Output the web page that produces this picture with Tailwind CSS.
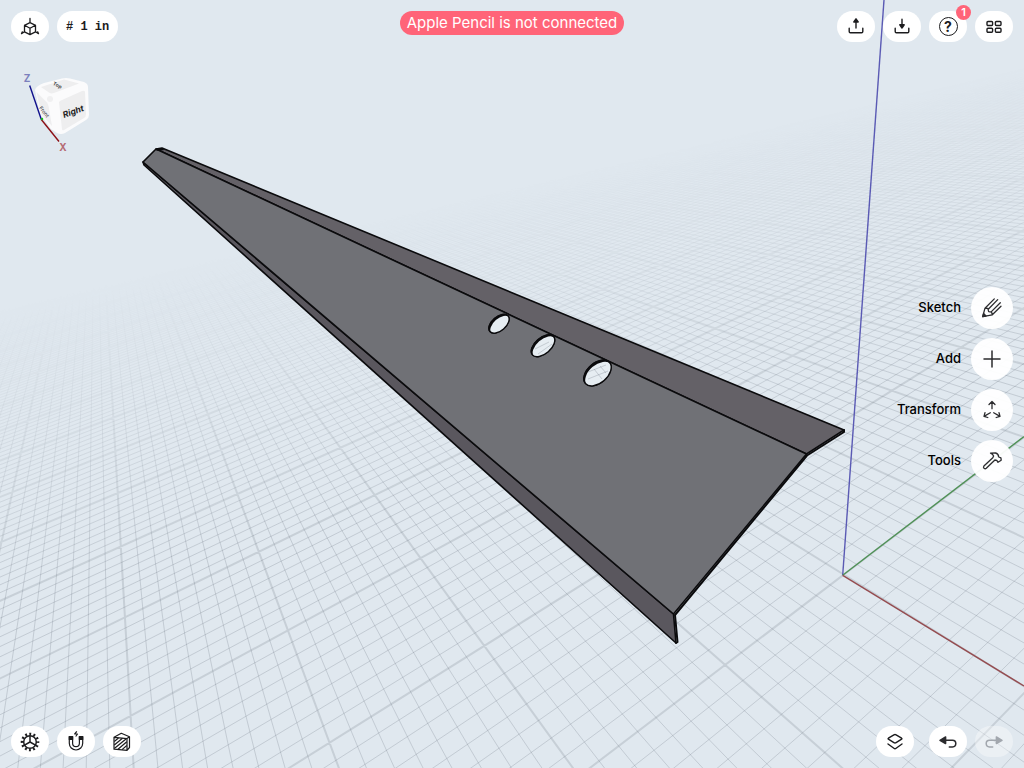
<!DOCTYPE html>
<html lang="en">
<head>
<meta charset="utf-8">
<meta name="viewport" content="width=device-width, initial-scale=1">
<title>3D modeling workspace</title>
<script src="https://cdn.jsdelivr.net/npm/@tailwindcss/browser@4"></script>
</head>
<body class="bg-[#e0e8ef] font-[Inter,'Liberation_Sans',sans-serif] text-[#1c1c1e]">
<div class="relative flex h-screen flex-col overflow-hidden">

  <!-- 3D viewport -->
  <svg class="absolute inset-0 h-full w-full" viewBox="0 0 1024 768" preserveAspectRatio="xMidYMid slice" aria-label="3D model" role="img">
    <defs>
      <linearGradient id="fade" gradientUnits="userSpaceOnUse" x1="500" y1="190" x2="565" y2="465">
        <stop offset="0" stop-color="#fff" stop-opacity="0"/>
        <stop offset="0.3" stop-color="#fff" stop-opacity="0.25"/>
        <stop offset="1" stop-color="#fff" stop-opacity="1"/>
      </linearGradient>
      <mask id="haze" maskUnits="userSpaceOnUse" x="0" y="0" width="1024" height="768">
        <rect width="1024" height="768" fill="url(#fade)"/>
      </mask>
      <clipPath id="h1"><ellipse rx="12" ry="7"/></clipPath>
      <clipPath id="h2"><ellipse rx="14" ry="8"/></clipPath>
      <clipPath id="h3"><ellipse rx="16" ry="10"/></clipPath>
    </defs>
    <g mask="url(#haze)" fill="none" stroke="#5b6470">
      <path id="minor" stroke-width="1" stroke-opacity="0.22"/>
      <path id="major" stroke-width="2" stroke-opacity="0.19"/>
    </g>
    <g fill="none" stroke-width="1.4">
      <path d="M842.7 575.3L884 0" stroke="#5a5ab4"/>
      <path d="M842.7 575.3L1024 436.5" stroke="#4f9156"/>
      <path d="M842.7 575.3L1024 686" stroke="#954c50"/>
    </g>
    <g stroke="#0b0b0d" stroke-width="1.6" stroke-linejoin="round" stroke-linecap="round">
      <path d="M156 149L162 148L844 430L806.5 454Z" fill="#646167"/>
      <path d="M143 162L144 165L676 643L673.5 614Z" fill="#5a575e"/>
      <path d="M156 149L143 162L673.5 614L806.5 454Z" fill="#707176"/>
      <path d="M844 430L844 432L807 455.500L675 615L677.500 642L676 643" fill="none" stroke-width="2"/>
      <path d="M157 150L163 149.500" fill="none"/>
    </g>
    <g fill="#e6edf2" stroke="#0b0b0d">
      <g transform="translate(499 323.7) rotate(-41)"><ellipse rx="12" ry="7" fill="#0b0b0d"/><ellipse cy="2.200" rx="12" ry="7" clip-path="url(#h1)" stroke="none"/><ellipse rx="12" ry="7" fill="none" stroke-width="1.400"/></g>
      <g transform="translate(543 345.7) rotate(-41)"><ellipse rx="14" ry="8" fill="#0b0b0d"/><ellipse cy="2.200" rx="14" ry="8" clip-path="url(#h2)" stroke="none"/><ellipse rx="14" ry="8" fill="none" stroke-width="1.400"/></g>
      <g transform="translate(597.5 373) rotate(-41)"><ellipse rx="16" ry="10" fill="#0b0b0d"/><ellipse cy="2.200" rx="16" ry="10" clip-path="url(#h3)" stroke="none"/><ellipse rx="16" ry="10" fill="none" stroke-width="1.400"/></g>
      <path d="M535 349L549 342M538 354L552 344M588 372L606 365M588 379L608 371M594 369L602 379M600 366L606 373" stroke="#5b6470" stroke-opacity="0.25" fill="none"/>
    </g>
  </svg>

  <!-- Top bar -->
  <header class="relative grid grid-cols-[1fr_auto_1fr] items-start px-[11px] pt-[11px]">
    <div class="flex gap-2">
      <button type="button" aria-label="Display mode" class="flex h-[31px] w-[38px] items-center justify-center rounded-full bg-white">
        <svg class="size-5" viewBox="0 0 20 20" fill="none" stroke="currentColor" stroke-width="1.3" stroke-linejoin="round" stroke-linecap="round">
          <path d="M10 5.700L15.500 8.300V14.800L10 17.600L4.500 14.800V8.300ZM4.500 8.300L10 11.200L15.500 8.300M10 11.200V17.600M10 1.500V5.700M4.500 14.800L1.500 16.600M15.500 14.800L18.500 16.600M2.300 14.800L1.500 16.700M17.700 14.800L18.500 16.700"/>
        </svg>
      </button>
      <button type="button" class="flex h-[31px] items-center justify-center rounded-full bg-white px-[9px] font-['Liberation_Mono',monospace] text-xs font-bold whitespace-pre"># 1 in</button>
    </div>
    <p class="rounded-full bg-[#ff6478] px-[7px] text-[15px] leading-6 text-white">Apple Pencil is not connected</p>
    <div class="flex justify-end gap-2">
      <button type="button" aria-label="Export" class="flex h-[31px] w-[38px] items-center justify-center rounded-full bg-white">
        <svg class="size-5" viewBox="0 0 20 20" fill="none" stroke="currentColor" stroke-width="1.4" stroke-linecap="round" stroke-linejoin="round">
          <path d="M3.200 11.200V14.500Q3.200 15.700 4.400 15.700H15.600Q16.800 15.700 16.800 14.500V11.200M10 4V11"/><path d="M7.800 5L10 1.800L12.200 5Z" fill="currentColor"/>
        </svg>
      </button>
      <button type="button" aria-label="Import" class="flex h-[31px] w-[38px] items-center justify-center rounded-full bg-white">
        <svg class="size-5" viewBox="0 0 20 20" fill="none" stroke="currentColor" stroke-width="1.4" stroke-linecap="round" stroke-linejoin="round">
          <path d="M3.200 11.200V14.500Q3.200 15.700 4.400 15.700H15.600Q16.800 15.700 16.800 14.500V11.200M10 2.200V9"/><path d="M7.800 7.800L10 11L12.200 7.800Z" fill="currentColor"/>
        </svg>
      </button>
      <button type="button" aria-label="Help, 1 notification" class="relative flex h-[31px] w-[38px] items-center justify-center rounded-full bg-white">
        <span class="flex size-[19px] items-center justify-center rounded-full border-[1.5px] border-current text-[14px] leading-none font-bold">?</span>
        <span class="absolute -top-[6px] -right-[4px] flex size-[15px] items-center justify-center rounded-full bg-[#ff6478] text-[11px] leading-none font-semibold text-white">1</span>
      </button>
      <button type="button" aria-label="All designs" class="flex h-[31px] w-[38px] items-center justify-center rounded-full bg-white">
        <svg class="size-5" viewBox="0 0 20 20" fill="none" stroke="currentColor" stroke-width="1.4">
          <rect x="3" y="4.500" width="5.600" height="4" rx="1"/><rect x="11.400" y="4.500" width="5.600" height="4" rx="1"/><rect x="3" y="11.200" width="5.600" height="4" rx="1"/><rect x="11.400" y="11.200" width="5.600" height="4" rx="1"/>
        </svg>
      </button>
    </div>
  </header>

  <main class="relative flex flex-1 justify-between px-[11px]">
    <!-- Orientation cube -->
    <a href="#view" aria-label="View orientation" class="mt-[28px] ml-[9px] self-start">
      <svg class="h-[84px] w-[74px]" viewBox="20 70 74 84" font-family="Inter, 'Liberation Sans', sans-serif">
        <path d="M35 90Q36 86 44 83L62 78.500Q66 77.500 70 78.500L84 82Q88 83.500 88 87L89 115Q89 118 86 120L65 133Q61 135 57 133L51 129L40 114Z" fill="#fbfbfc"/>
        <path d="M59 102Q60 101 62 100L82 91Q85 90 85 92L86 114Q86 117 84 118L64 130Q62 131 62 129Z" fill="#eeeeef"/>
        <path d="M36.500 92L47 102.500Q48 104 48.500 106L52 126L41 114Z" fill="#eeeeef"/>
        <path d="M41 87L64 79.500L79 83.500L54 93Q51 94 49 92.500Z" fill="#eeeeef"/>
        <circle cx="50" cy="99" r="3" fill="#f0f0f1"/>
        <text x="73" y="114.500" text-anchor="middle" font-size="8.500" font-weight="700" font-style="italic" transform="rotate(-20 73 111)" fill="#232325">Right</text>
        <text x="44" y="113.500" text-anchor="middle" font-size="5" font-weight="600" transform="rotate(52 44 112)" fill="#5b5b5e">Front</text>
        <text x="57.500" y="87" text-anchor="middle" font-size="5" font-weight="700" transform="rotate(25 57.500 85)" fill="#4b4b4e">Top</text>
        <path d="M29.700 85.500L41.300 119.500" stroke="#10108c" stroke-width="1.400"/>
        <path d="M41.300 119.500L59 141.500" stroke="#8c1016" stroke-width="1.400"/>
        <circle cx="42" cy="119" r="1.200" fill="#18b418"/>
        <text x="27" y="82" text-anchor="middle" font-size="10" font-weight="700" fill="#7c80bd">Z</text>
        <text x="63" y="151" text-anchor="middle" font-size="10" font-weight="700" fill="#b56c74">X</text>
      </svg>
    </a>

    <!-- Modeling tools -->
    <nav aria-label="Modeling tools" class="flex flex-col items-end gap-[9px] self-center text-[13px] font-medium text-black">
      <button type="button" class="flex items-center gap-[10px]">Sketch
        <span class="flex size-[42px] items-center justify-center rounded-full bg-white/95">
          <svg class="size-6" viewBox="0 0 24 24" fill="none" stroke="#2b2b2e" stroke-width="1.300" stroke-linejoin="round" stroke-linecap="round"><path d="M2.700 20.700L5 12.200L14.300 2.900M5 12.200L7.800 12.400L8.700 15.700L11.600 16.200L12.300 18.800L2.700 20.700M8.500 13L17.700 3.600M11.400 15.600L20.300 6.700M12.300 18.800L21 10.200"/><path d="M2.700 20.700L3.600 17.400L6 20Z" fill="#2b2b2e"/></svg>
        </span>
      </button>
      <button type="button" class="flex items-center gap-[10px]">Add
        <span class="flex size-[42px] items-center justify-center rounded-full bg-white/95">
          <svg class="size-6" viewBox="0 0 24 24" fill="none" stroke="#2b2b2e" stroke-width="1.500" stroke-linecap="round"><path d="M4 12H20M12 4V20"/></svg>
        </span>
      </button>
      <button type="button" class="flex items-center gap-[10px]">Transform
        <span class="flex size-[42px] items-center justify-center rounded-full bg-white/95">
          <svg class="size-6" viewBox="0 0 24 24" fill="none" stroke="#2b2b2e" stroke-width="1.300" stroke-linejoin="round" stroke-linecap="round"><path d="M12 10.700V3.500M9 6.500L12 3.500L15 6.500M10.300 14.800L4 18.400M5 14.600L4 18.400L7.800 19.500M13.700 14.800L20 18.400M19 14.600L20 18.400L16.200 19.500"/></svg>
        </span>
      </button>
      <button type="button" class="flex items-center gap-[10px]">Tools
        <span class="flex size-[42px] items-center justify-center rounded-full bg-white/95">
          <svg class="size-6" viewBox="0 0 24 24" fill="none" stroke="#2b2b2e" stroke-width="1.300" stroke-linejoin="round" stroke-linecap="round"><path d="M12.800 8.800L3.900 17.100Q3 18.200 4 19.200Q5.200 20.200 6.300 19.300L14.900 11M12.800 8.800L13.600 7Q12.800 5 10.500 4.100L15.500 4Q18.400 4.600 18.700 8L20.900 8.800L21.200 11.200L18 13.300L16.800 11.400L14.900 11"/></svg>
        </span>
      </button>
    </nav>
  </main>

  <!-- Bottom bar -->
  <footer class="relative flex justify-between px-[11px] pb-[11px]">
    <div class="flex gap-2">
      <button type="button" aria-label="Settings" class="flex h-[31px] w-[38px] items-center justify-center rounded-full bg-white">
        <svg class="size-5" viewBox="0 0 20 20" fill="none" stroke="currentColor" stroke-width="1.500">
          <circle cx="10" cy="10" r="6.300"/>
          <circle cx="10" cy="10" r="8" stroke-width="2.600" stroke-dasharray="1.900 2.289" stroke-dashoffset="0.950"/>
          <path d="M10 10V3.600M10 10L4.500 13.200M10 10L15.500 13.200"/>
        </svg>
      </button>
      <button type="button" aria-label="Snapping" class="flex h-[31px] w-[38px] items-center justify-center rounded-full bg-white">
        <svg class="size-5 overflow-visible" viewBox="0 0 20 20" fill="none" stroke="currentColor" stroke-width="1.200" stroke-linejoin="round">
          <path d="M3.300 4.500H6.600V11.300A3.400 3.400 0 0 0 13.400 11.300V4.500H16.700V11.300A6.700 6.700 0 0 1 3.300 11.300Z"/><path d="M3.300 4.500H6.600V7.500H3.300ZM13.400 4.500H16.700V7.500H13.400Z" fill="currentColor"/><path d="M10.800 -.600L8.700 2H11.500L9.700 4.500"/>
        </svg>
      </button>
      <button type="button" aria-label="Section view" class="flex h-[31px] w-[38px] items-center justify-center rounded-full bg-white">
        <svg class="size-5" viewBox="0 0 20 20" fill="none" stroke="currentColor" stroke-width="1.200" stroke-linejoin="round">
          <path d="M2 5.300L9.300 1.300L17.500 4.800V15.500L15 18.300L2 17.200ZM2 5.300L15 6.600V18.300M15 6.600L17.500 4.800"/><path d="M2.300 9.500L6.500 6M2.300 13L10.500 6.300M2.300 16.500L14 7M6 17.200L14.800 9.800M10 17.600L14.800 13.500"/>
        </svg>
      </button>
    </div>
    <div class="flex gap-2">
      <button type="button" aria-label="Items" class="mr-[7px] flex h-[31px] w-[38px] items-center justify-center rounded-full bg-white">
        <svg class="size-5" viewBox="0 0 20 20" fill="none" stroke="currentColor" stroke-width="1.400" stroke-linejoin="round" stroke-linecap="round"><path d="M8.900 2.800Q10 2.100 11.100 2.800L16.600 6.200Q17.300 6.700 16.600 7.200L11.100 10.600Q10 11.300 8.900 10.600L3.400 7.200Q2.700 6.700 3.400 6.200ZM3 12L8.900 16.300Q10 17.100 11.100 16.300L17 12"/></svg>
      </button>
      <button type="button" aria-label="Undo" class="flex h-[31px] w-[38px] items-center justify-center rounded-full bg-white">
        <svg class="size-5" viewBox="0 0 20 20" fill="none" stroke="#2b2b2e" stroke-width="1.500" stroke-linejoin="round" stroke-linecap="round"><path d="M6 8.300H14.500A3.300 3.300 0 0 1 14.500 14.900H11.300"/><path d="M2 8.300L7.600 5V11.600Z" fill="#2b2b2e"/></svg>
      </button>
      <button type="button" aria-label="Redo" disabled class="flex h-[31px] w-[38px] items-center justify-center rounded-full bg-white/35">
        <svg class="size-5" viewBox="0 0 20 20" fill="none" stroke="#a2a7ae" stroke-width="1.500" stroke-linejoin="round" stroke-linecap="round"><path d="M14 8.300H5.500A3.300 3.300 0 0 0 5.500 14.900H8.700"/><path d="M18 8.300L12.400 5V11.600Z" fill="#a2a7ae"/></svg>
      </button>
    </div>
  </footer>
</div>

<script>
// Anchor points of the ground plane: [grid d, grid u, screen x, screen y].
const anchors = [
  [0, 0, 842.7, 575.3], [1, 0, 726, 665], [2, 0, 579, 776], [-1, 0, 941.7, 500],
  [0, -1, 1029, 689], [2, 1, 484, 645.7], [2, 2, 420, 558.3], [2, 3, 373.3, 495],
  [2, 4, 341.7, 446.7], [3, 1, 330, 741.7], [3, 2, 289.3, 630], [3, 3, 258.3, 553.3],
  [4, 2, 130, 715], [4, 3, 125, 618.3], [4, 4, 120.7, 546.7]
];
const divisions = 8; // minor cells per major cell
const extent = 30;   // major cells drawn on each side of the origin

// Least-squares plane-to-screen projection through the anchors.
function solveProjection(points) {
  const m = Array.from({ length: 8 }, () => new Array(9).fill(0));
  const add = (row, value) => {
    for (let i = 0; i < 8; i++) {
      for (let j = 0; j < 8; j++) m[i][j] += row[i] * row[j];
      m[i][8] += row[i] * value;
    }
  };
  for (const [d, u, sx, sy] of points) {
    const x = sx / 500, y = sy / 500;
    add([d, u, 1, 0, 0, 0, -x * d, -x * u], x);
    add([0, 0, 0, d, u, 1, -y * d, -y * u], y);
  }
  for (let i = 0; i < 8; i++) {
    let p = i;
    for (let r = i + 1; r < 8; r++) if (Math.abs(m[r][i]) > Math.abs(m[p][i])) p = r;
    [m[i], m[p]] = [m[p], m[i]];
    for (let r = 0; r < 8; r++) {
      if (r === i) continue;
      const f = m[r][i] / m[i][i];
      for (let c = i; c < 9; c++) m[r][c] -= f * m[i][c];
    }
  }
  return m.map((row, i) => row[8] / row[i]);
}

const h = solveProjection(anchors);
const depth = (d, u) => h[6] * d + h[7] * u + 1;
const project = (d, u) => {
  const w = depth(d, u);
  return [500 * (h[0] * d + h[1] * u + h[2]) / w, 500 * (h[3] * d + h[4] * u + h[5]) / w];
};

// One grid line between two plane points, cut where it passes behind the camera.
function segment(a, b) {
  const near = 0.08, wa = depth(...a), wb = depth(...b);
  if (wa < near && wb < near) return '';
  const cut = (p, q, wp, wq) => {
    if (wp >= near) return p;
    const t = (near - wp) / (wq - wp);
    return [p[0] + (q[0] - p[0]) * t, p[1] + (q[1] - p[1]) * t];
  };
  const s = project(...cut(a, b, wa, wb)), e = project(...cut(b, a, wb, wa));
  return `M${s[0].toFixed(1)} ${s[1].toFixed(1)}L${e[0].toFixed(1)} ${e[1].toFixed(1)}`;
}

let minor = '', major = '';
for (let i = -extent * divisions; i <= extent * divisions; i++) {
  const k = i / divisions;
  const lines = segment([k, -extent], [k, extent]) + segment([-extent, k], [extent, k]);
  if (i % divisions === 0) major += lines; else minor += lines;
}
document.getElementById('minor').setAttribute('d', minor);
document.getElementById('major').setAttribute('d', major);
</script>
</body>
</html>
